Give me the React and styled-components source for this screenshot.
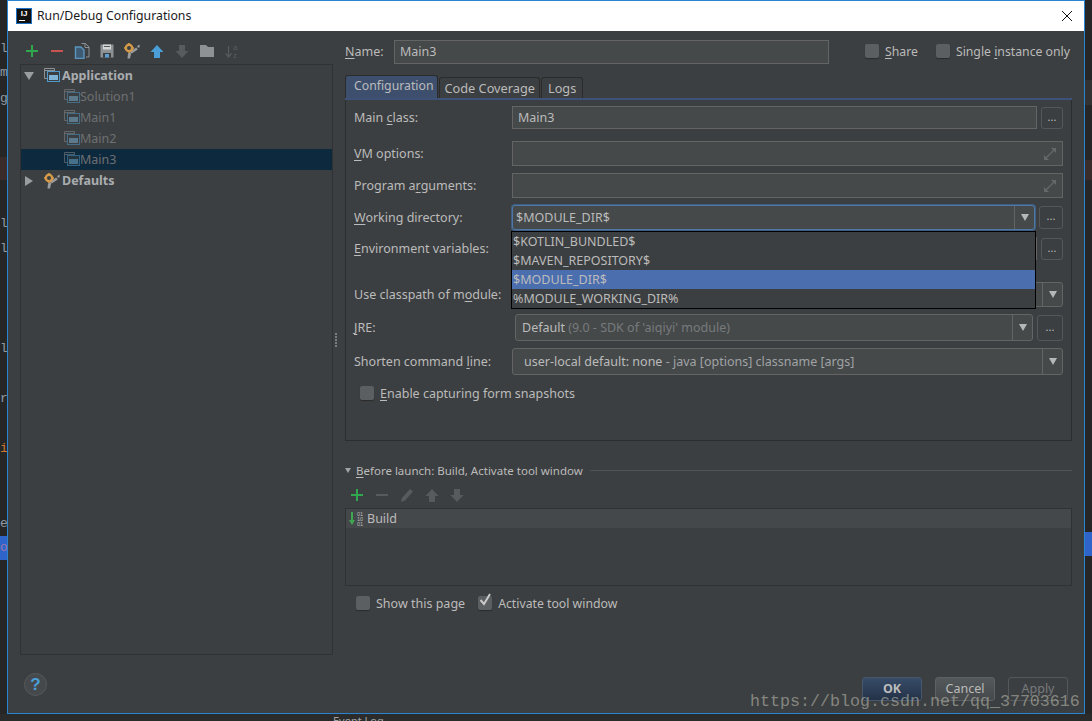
import React from 'react';
import styled, { createGlobalStyle } from 'styled-components';

const GlobalStyle = createGlobalStyle`
html, body { margin: 0; padding: 0; background: #2b2b2b; overflow: hidden; }
* { box-sizing: border-box; }
u { text-underline-offset: 2px; text-decoration-thickness: 1px; }
`;

const leftBits = [
    { h: 42, text: '' },
    { h: 14, text: 'l' },
    { h: 10, text: '' },
    { h: 14, text: 'm' },
    { h: 12, text: '' },
    { h: 14, text: 'g_' },
    { h: 51, text: '' },
    { h: 23, bg: '#3b2c2c' },
    { h: 37, text: '' },
    { h: 14, text: 'l' },
    { h: 11, text: '' },
    { h: 14, text: 'l' },
    { h: 86, text: '' },
    { h: 14, text: 'l' },
    { h: 36, text: '' },
    { h: 14, text: 'r' },
    { h: 36, text: '' },
    { h: 14, text: 'i', color: '#cc7832' },
    { h: 61, text: '' },
    { h: 14, text: 'er' },
    { h: 5, text: '' },
    { h: 24, bg: '#2f65ca', text: 'o', color: '#9876aa' },
];

const rightBits = [
    { h: 80, text: '' },
    { h: 25, bg: '#323232' },
    { h: 55, text: '' },
    { h: 20, bg: '#3b2c2c' },
    { h: 352, text: '' },
    { h: 24, bg: '#2f65ca' },
];

const tree = [
    { name: 'Solution1' },
    { name: 'Main1' },
    { name: 'Main2' },
    { name: 'Main3', selected: true },
];

const macros = ['$KOTLIN_BUNDLED$', '$MAVEN_REPOSITORY$', '$MODULE_DIR$', '%MODULE_WORKING_DIR%'];

function AppIcon({ dim }) {
    return (
        <svg width="16" height="16" viewBox="0 0 16 16" style={{ opacity: dim ? 0.5 : 1, flex: 'none' }}>
            <path d="M0.5 0.5h10v2M0.5 0.5v10h2.5" fill="none" stroke="#8d9194" />
            <path d="M1 2.5h10" stroke="#8d9194" />
            <rect x="3.5" y="3.5" width="12" height="10" fill="#3c3f41" stroke="#4e9bcb" />
            <rect x="5" y="7" width="9" height="5" fill="#7fb4d6" />
        </svg>
    );
}

function WrenchIcon() {
    return (
        <svg width="16" height="16" viewBox="0 0 16 16" style={{ flex: 'none' }}>
            <path d="M7 9.500l6-4" stroke="#9a9c9e" strokeWidth="2.600" fill="none" />
            <path d="M15.500 1.500l-2.300 1.600 0.600 1.700 1.900-0.500z" fill="#9a9c9e" />
            <path d="M7.500 9l-1.500 6.500h-2.500l0.500-5z" fill="#9a9c9e" />
            <circle cx="5" cy="5" r="3.200" fill="none" stroke="#d39a4a" strokeWidth="2.400" />
            <path d="M5 0v2M5 8v2M0 5h2M8 5h2" stroke="#d39a4a" strokeWidth="1.600" />
        </svg>
    );
}

function ToolIcon({ kind, off }) {
    const grey = off ? '#585b5d' : '#8e9294';
    return (
        <svg width="16" height="16" viewBox="0 0 16 16">
            {kind === 'plus' && <path d="M8 2v12M2 8h12" stroke={off ? '#585b5d' : '#2fa84f'} strokeWidth="2" />}
            {kind === 'minus' && <path d="M2 8h12" stroke={off ? '#585b5d' : '#c75450'} strokeWidth="2" />}
            {kind === 'copy' && (
                <g fill="none">
                    <path d="M7.500 0.500h4l3.500 3.500v10h-3" stroke="#8e9294" />
                    <path d="M11 0.500v4h4" stroke="#8e9294" />
                    <path d="M1.500 4h5.500l3 3v8.500H1.500z" stroke="#5c96c0" fill="#3d5b73" strokeWidth="1.400" />
                </g>
            )}
            {kind === 'save' && (
                <g>
                    <path d="M1.500 1.500h13v13h-13z" fill="#8e9294" />
                    <path d="M4 1.500h8v5H4z" fill="#d4d6d6" />
                    <path d="M5 3.500h6" stroke="#55585a" />
                    <path d="M4 10h8v4.500H4z" fill="#3c3f41" />
                    <path d="M6 11h4v3.500H6z" fill="#5c9fd0" />
                </g>
            )}
            {kind === 'up' && <path d="M8 2l6.500 7H11v6H5V9H1.500z" fill={off ? '#585b5d' : '#4a9fd8'} />}
            {kind === 'down' && <path d="M8 15l6.500-7H11V2H5v6H1.500z" fill={off ? '#585b5d' : '#4a9fd8'} />}
            {kind === 'folder' && <path d="M1 2h6l2 2h6v10H1z" fill={grey} />}
            {kind === 'pencil' && <path d="M3 11l8-9 3 2.500-8 9-4 1.500z" fill="#585b5d" />}
            {kind === 'sort' && (
                <g>
                    <path d="M4.500 3v11M1.500 10.500l3 3.500 3-3.500" fill="none" stroke="#585b5d" strokeWidth="1.200" />
                    <text x="9" y="7" fontSize="8" fill="#585b5d" fontFamily="'Liberation Sans', sans-serif">a</text>
                    <text x="9" y="15" fontSize="8" fill="#585b5d" fontFamily="'Liberation Sans', sans-serif">z</text>
                </g>
            )}
        </svg>
    );
}

function ExpandIcon() {
    return (
        <svg width="14" height="14" viewBox="0 0 14 14">
            <path d="M1.500 12.500l11-11" stroke="#63686a" strokeWidth="1.200" />
            <path d="M8 1h5v5zM1 8v5h5z" fill="#63686a" />
        </svg>
    );
}

function BuildIcon() {
    return (
        <svg width="16" height="16" viewBox="0 0 16 16" style={{ flex: 'none' }}>
            <path d="M5 1v8h2l-3 5-3-5h2V1z" fill="#3fa650" />
            <g fontSize="5.500" fill="#bbbbbb" fontFamily="'Liberation Sans', sans-serif">
                <text x="9" y="5">01</text>
                <text x="9" y="10">10</text>
                <text x="9" y="15">01</text>
            </g>
        </svg>
    );
}

function App() {
    return (
        <Screen>
            <GlobalStyle />
            <Top>
                <Strip $w={7}>
                    {leftBits.map((b, i) => (
                        <StripBit key={i} $h={b.h} $bg={b.bg} $color={b.color}>{b.text}</StripBit>
                    ))}
                </Strip>
                <Dialog>
                    <TitleBar>
                        <Logo><span>IJ</span><i /></Logo>
                        <TitleText>Run/Debug Configurations</TitleText>
                        <CloseIcon width="12" height="12" viewBox="0 0 12 12">
                            <path d="M1 1l10 10M11 1L1 11" stroke="#111" strokeWidth="1" />
                        </CloseIcon>
                    </TitleBar>
                    <Body>
                        <LeftPanel>
                            <Toolbar>
                                <ToolIcon kind="plus" />
                                <ToolIcon kind="minus" />
                                <ToolIcon kind="copy" />
                                <ToolIcon kind="save" />
                                <WrenchIcon />
                                <ToolIcon kind="up" />
                                <ToolIcon kind="down" off />
                                <ToolIcon kind="folder" />
                                <ToolIcon kind="sort" />
                            </Toolbar>
                            <Tree>
                                <TreeRow>
                                    <Caret $open />
                                    <AppIcon />
                                    <GroupName>Application</GroupName>
                                </TreeRow>
                                {tree.map((t) => (
                                    <TreeRow key={t.name} $child $selected={t.selected}>
                                        <AppIcon dim />
                                        <ChildName>{t.name}</ChildName>
                                    </TreeRow>
                                ))}
                                <TreeRow>
                                    <Caret />
                                    <WrenchIcon />
                                    <GroupName>Defaults</GroupName>
                                </TreeRow>
                            </Tree>
                        </LeftPanel>
                        <Splitter><b /><b /><b /><b /><b /></Splitter>
                        <RightPanel>
                            <NameRow>
                                <NameLabel><u>N</u>ame:</NameLabel>
                                <NameInput>Main3</NameInput>
                                <CheckItem $left={36} $small><Box /><span><u>S</u>hare</span></CheckItem>
                                <CheckItem $left={18} $small><Box /><span>Single <u>i</u>nstance only</span></CheckItem>
                            </NameRow>
                            <Tabs>
                                <Tab $active>Configuration</Tab>
                                <Tab>Code Coverage</Tab>
                                <Tab $pad={6}>Logs</Tab>
                            </Tabs>
                            <TabPanel>
                                <Row $h={23}>
                                    <Label>Main <u>c</u>lass:</Label>
                                    <Input>Main3</Input>
                                    <MoreButton $w={22} $h={22}>...</MoreButton>
                                </Row>
                                <Row $h={25} $mt={12}>
                                    <Label><u>V</u>M options:</Label>
                                    <Input $end><ExpandIcon /></Input>
                                </Row>
                                <Row $h={25} $mt={7}>
                                    <Label>Program a<u>r</u>guments:</Label>
                                    <Input $end><ExpandIcon /></Input>
                                </Row>
                                <Row $h={25} $mt={7}>
                                    <Label><u>W</u>orking directory:</Label>
                                    <ComboWrap>
                                        <Combo $focus>
                                            <ComboText $pad={3}>$MODULE_DIR$</ComboText>
                                            <Arrow />
                                        </Combo>
                                        <Popup>
                                            {macros.map((m, i) => (
                                                <PopupItem key={m} $selected={i === 2}>{m}</PopupItem>
                                            ))}
                                        </Popup>
                                    </ComboWrap>
                                    <MoreButton $w={24} $h={23}>...</MoreButton>
                                </Row>
                                <Row $h={23} $mt={7}>
                                    <Label><u>E</u>nvironment variables:</Label>
                                    <Input />
                                    <MoreButton $w={22} $h={22}>...</MoreButton>
                                </Row>
                                <Row $h={25} $mt={22}>
                                    <Label>Use classpath of m<u>o</u>dule:</Label>
                                    <Combo><ComboText /><Arrow /></Combo>
                                </Row>
                                <Row $h={27} $mt={7}>
                                    <Label><u>J</u>RE:</Label>
                                    <Combo $shift={3}>
                                        <ComboText $pad={6}>Default <Muted>(9.0 - SDK of 'aiqiyi' module)</Muted></ComboText>
                                        <Arrow />
                                    </Combo>
                                    <MoreButton $w={26} $h={26}>...</MoreButton>
                                </Row>
                                <Row $h={27} $mt={7}>
                                    <Label>Shorten command <u>l</u>ine:</Label>
                                    <Combo>
                                        <ComboText $pad={11}>user-local default: none <Soft>- java [options] classname [args]</Soft></ComboText>
                                        <Arrow />
                                    </Combo>
                                </Row>
                                <SnapshotRow>
                                    <CheckItem><Box /><span><u>E</u>nable capturing form snapshots</span></CheckItem>
                                </SnapshotRow>
                            </TabPanel>
                            <BeforeHeader>
                                <SmallCaret />
                                <span><u>B</u>efore launch: Build, Activate tool window</span>
                                <HeaderLine />
                            </BeforeHeader>
                            <BeforeTools>
                                <ToolIcon kind="plus" />
                                <ToolIcon kind="minus" off />
                                <ToolIcon kind="pencil" />
                                <ToolIcon kind="up" off />
                                <ToolIcon kind="down" off />
                            </BeforeTools>
                            <TaskList>
                                <TaskRow><BuildIcon /><span>Build</span></TaskRow>
                            </TaskList>
                            <BottomChecks>
                                <CheckItem><Box /><span>Show this page</span></CheckItem>
                                <CheckItem $left={13} $small>
                                    <Box>
                                        <svg width="16" height="16" viewBox="0 0 16 16">
                                            <path d="M3.500 7l3.500 4 6-10" fill="none" stroke="#c9c9c9" strokeWidth="2" />
                                        </svg>
                                    </Box>
                                    <span>Activate tool window</span>
                                </CheckItem>
                            </BottomChecks>
                        </RightPanel>
                    </Body>
                    <Footer>
                        <HelpButton>?</HelpButton>
                        <FooterButtons>
                            <DialogButton $kind="ok">OK</DialogButton>
                            <DialogButton>Cancel</DialogButton>
                            <DialogButton $kind="off">Apply</DialogButton>
                        </FooterButtons>
                    </Footer>
                </Dialog>
                <Strip $w={7}>
                    {rightBits.map((b, i) => (
                        <StripBit key={i} $h={b.h} $bg={b.bg}>{b.text}</StripBit>
                    ))}
                </Strip>
            </Top>
            <BottomStrip>
                <span>Event Log</span>
            </BottomStrip>
            <Watermark>https://blog.csdn.net/qq_37703616</Watermark>
        </Screen>
    );
}

const uiFont = `"Noto Sans", "Open Sans", sans-serif`;

const Screen = styled.div`
position: relative;
width: 1092px;
height: 721px;
overflow: hidden;
background: #2b2b2b;
font-family: ${uiFont};
font-size: 12.5px;
color: #bbbbbb;
`;

const Top = styled.div`
display: flex;
height: 714px;
`;

const Strip = styled.div`
width: ${(p) => p.$w}px;
flex: none;
overflow: hidden;
background: #262626;
font-family: "Liberation Mono", monospace;
font-size: 13px;
`;

const StripBit = styled.div`
height: ${(p) => p.$h}px;
line-height: ${(p) => p.$h}px;
background: ${(p) => p.$bg || 'transparent'};
color: ${(p) => p.$color || '#8f9aa5'};
white-space: nowrap;
`;

const Dialog = styled.div`
flex: 1;
min-width: 0;
display: flex;
flex-direction: column;
border: 1px solid #2a84d2;
background: #3c3f41;
`;

const TitleBar = styled.div`
height: 30px;
flex: none;
display: flex;
align-items: center;
padding: 0 9px 0 8px;
background: #ffffff;
`;

const Logo = styled.div`
width: 16px;
height: 16px;
position: relative;
flex: none;
background: #111;
border: 1px solid #1b6fc4;
color: #fff;
font: bold 8px/10px "Liberation Sans", sans-serif;
text-align: center;
span { display: block; }
i { display: block; width: 6px; height: 1px; margin: 1px 0 0 2px; background: #fff; }
`;

const TitleText = styled.div`
margin-left: 5px;
padding-bottom: 2px;
flex: 1;
color: #1a1a1a;
font-size: 12.25px;
`;

const CloseIcon = styled.svg`
margin-right: 2px;
`;

const Body = styled.div`
height: 624px;
flex: none;
display: flex;
`;

const LeftPanel = styled.div`
width: 325px;
flex: none;
display: flex;
flex-direction: column;
padding-left: 12px;
`;

const Toolbar = styled.div`
height: 33px;
flex: none;
display: flex;
align-items: center;
gap: 9px;
padding: 7px 0 0 4px;
`;

const Tree = styled.div`
flex: 1;
border: 1px solid #2f3133;
`;

const TreeRow = styled.div`
height: 21px;
display: flex;
align-items: center;
padding-left: ${(p) => (p.$child ? 43 : 3)}px;
background: ${(p) => (p.$selected ? '#0d293e' : 'transparent')};
`;

const Caret = styled.span`
width: 0;
height: 0;
flex: none;
${(p) => (p.$open
        ? 'border-left: 5px solid transparent; border-right: 5px solid transparent; border-top: 8px solid #9a9da0; margin-right: 10px;'
        : 'border-top: 5px solid transparent; border-bottom: 5px solid transparent; border-left: 8px solid #9a9da0; margin-left: 1px; margin-right: 11px;')}
`;

const GroupName = styled.span`
margin-left: 2px;
font-weight: 700;
color: #a9adb0;
`;

const ChildName = styled.span`
color: #6d7072;
`;

const Splitter = styled.div`
width: 12px;
flex: none;
display: flex;
flex-direction: column;
align-items: center;
justify-content: center;
gap: 1px;
padding: 0 6px 7px 0;
b { width: 2px; height: 2px; background: #7a7d7f; }
`;

const RightPanel = styled.div`
flex: 1;
min-width: 0;
display: flex;
flex-direction: column;
padding: 9px 12px 0 0;
`;

const NameRow = styled.div`
height: 24px;
flex: none;
display: flex;
align-items: center;
`;

const NameLabel = styled.div`
width: 49px;
flex: none;
padding-bottom: 2px;
`;

const NameInput = styled.div`
width: 435px;
height: 24px;
flex: none;
padding: 0 5px;
line-height: 22px;
border: 1px solid #646464;
background: #45494a;
`;

const CheckItem = styled.div`
display: flex;
align-items: center;
gap: 6px;
padding-bottom: 2px;
margin-left: ${(p) => p.$left || 0}px;
font-size: ${(p) => (p.$small ? 12.25 : 12.5)}px;
white-space: nowrap;
`;

const Box = styled.div`
width: 14px;
height: 14px;
flex: none;
position: relative;
border-radius: 2px;
background: #5c5f61;
box-shadow: 0 1px 1px #2b2b2b;
svg { position: absolute; left: -1px; top: -3px; }
`;

const Tabs = styled.div`
height: 25px;
flex: none;
margin-top: 11px;
display: flex;
align-items: flex-end;
gap: 1px;
border-bottom: 2px solid #3e5178;
`;

const Tab = styled.div`
height: ${(p) => (p.$active ? 23 : 21)}px;
line-height: ${(p) => (p.$active ? 19 : 20)}px;
padding: ${(p) => (p.$active ? '0 4px 0 8px' : `0 ${p.$pad || 4}px`)};
font-size: ${(p) => (p.$active ? 12.25 : 12.75)}px;
border: 1px solid #2b2b2b;
border-bottom: none;
border-radius: 3px 3px 0 0;
background: ${(p) => (p.$active ? '#3d4f6d' : 'transparent')};
`;

const TabPanel = styled.div`
height: 341px;
flex: none;
padding: 6px 8px 0 8px;
border: 1px solid #2b2d2f;
border-top: none;
`;

const Row = styled.div`
height: ${(p) => p.$h}px;
margin-top: ${(p) => p.$mt || 0}px;
display: flex;
align-items: center;
gap: 4px;
`;

const Label = styled.div`
width: 154px;
flex: none;
white-space: nowrap;
`;

const Input = styled.div`
flex: 1;
min-width: 0;
height: 100%;
display: flex;
align-items: center;
justify-content: ${(p) => (p.$end ? 'flex-end' : 'flex-start')};
padding: 0 5px;
border: 1px solid #646464;
background: #45494a;
`;

const MoreButton = styled.div`
width: ${(p) => p.$w}px;
height: ${(p) => p.$h}px;
flex: none;
text-align: center;
line-height: ${(p) => p.$h - 5}px;
font-size: 11px;
border: 1px solid #555759;
border-radius: 3px;
`;

const ComboWrap = styled.div`
flex: 1;
min-width: 0;
height: 100%;
display: flex;
position: relative;
`;

const Combo = styled.div`
flex: 1;
min-width: 0;
height: 100%;
margin-left: ${(p) => p.$shift || 0}px;
display: flex;
align-items: center;
border: 1px solid ${(p) => (p.$focus ? '#4f78a6' : '#646464')};
border-radius: 3px;
background: #45494a;
box-shadow: ${(p) => (p.$focus ? '0 0 0 1px #3f5d80' : 'none')};
`;

const ComboText = styled.div`
flex: 1;
min-width: 0;
padding-left: ${(p) => p.$pad || 0}px;
white-space: nowrap;
overflow: hidden;
`;

const Arrow = styled.div`
width: 20px;
height: 100%;
flex: none;
border-left: 1px solid #646464;
display: flex;
align-items: center;
justify-content: center;
&::after {
    content: '';
    border-left: 4.5px solid transparent;
    border-right: 4.5px solid transparent;
    border-top: 7px solid #b5b8ba;
}
`;

const Muted = styled.span`
color: #777a7c;
`;

const Soft = styled.span`
color: #a0a3a5;
`;

const Popup = styled.div`
position: absolute;
left: -1px;
top: 26px;
z-index: 2;
width: 525px;
height: 78px;
padding: 0;
border: 1px solid #000;
background: #3c3f41;
`;

const PopupItem = styled.div`
height: 19px;
line-height: 19px;
padding-left: 1px;
background: ${(p) => (p.$selected ? '#4b6eaf' : 'transparent')};
`;

const SnapshotRow = styled.div`
margin-top: 11px;
height: 16px;
display: flex;
padding-left: 6px;
`;

const BeforeHeader = styled.div`
height: 16px;
flex: none;
margin-top: 21px;
display: flex;
align-items: center;
gap: 5px;
font-size: 11.5px;
`;

const SmallCaret = styled.span`
border-left: 3.5px solid transparent;
border-right: 3.5px solid transparent;
border-top: 5px solid #a0a3a5;
`;

const HeaderLine = styled.div`
flex: 1;
height: 1px;
margin-left: 2px;
background: #515456;
`;

const BeforeTools = styled.div`
height: 16px;
flex: none;
margin-top: 9px;
display: flex;
gap: 9px;
padding-left: 4px;
`;

const TaskList = styled.div`
height: 78px;
flex: none;
margin-top: 5px;
border: 1px solid #2f3133;
`;

const TaskRow = styled.div`
height: 19px;
display: flex;
align-items: center;
gap: 3px;
padding-left: 2px;
background: #45484a;
`;

const BottomChecks = styled.div`
height: 16px;
flex: none;
margin-top: 10px;
display: flex;
padding-left: 11px;
`;

const Footer = styled.div`
flex: 1;
display: flex;
justify-content: space-between;
padding: 18px 16px 0 16px;
`;

const HelpButton = styled.div`
width: 23px;
height: 23px;
border-radius: 50%;
border: 1px solid #56595b;
background: #45494c;
color: #4a9fd8;
font: bold 17px/21px "Liberation Sans", sans-serif;
text-align: center;
`;

const FooterButtons = styled.div`
display: flex;
gap: 13px;
padding-top: 4px;
`;

const DialogButton = styled.div`
width: 60px;
height: 24px;
line-height: 22px;
text-align: center;
border-radius: 3px;
border: 1px solid ${(p) => (p.$kind === 'ok' ? '#46566b' : p.$kind === 'off' ? '#55585a' : '#5e6163')};
background: ${(p) => (p.$kind === 'ok'
        ? 'linear-gradient(#384c68, #233247)'
        : p.$kind === 'off' ? 'transparent' : 'linear-gradient(#53585a, #45494b)')};
color: ${(p) => (p.$kind === 'off' ? '#777a7c' : '#bbbbbb')};
font-weight: ${(p) => (p.$kind === 'ok' ? 700 : 400)};
`;

const BottomStrip = styled.div`
height: 7px;
overflow: hidden;
padding-left: 333px;
background: #2b2b2b;
font-size: 11px;
line-height: 14px;
color: #a0a3a5;
`;

const Watermark = styled.div`
position: absolute;
left: 750px;
top: 692px;
font-family: "Liberation Mono", monospace;
font-size: 16.67px;
line-height: 20px;
color: rgba(170, 170, 160, 0.68);
white-space: nowrap;
pointer-events: none;
`;

export default App;
